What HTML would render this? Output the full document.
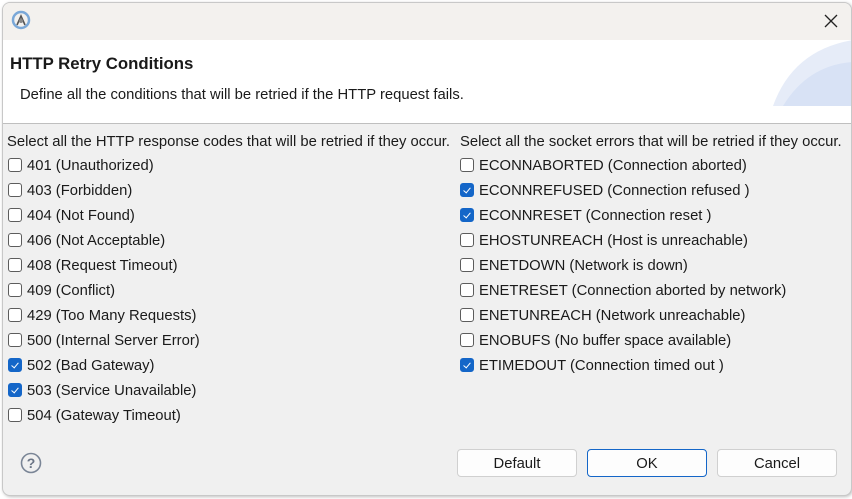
<!DOCTYPE html>
<html><head><style>
*{margin:0;padding:0;box-sizing:border-box}
body{width:852px;height:499px;background:#fff;font-family:"Liberation Sans",sans-serif;font-size:14.8px;color:#1a1a1a;position:relative;overflow:hidden}
.win{position:absolute;left:2px;top:2px;width:850px;height:494px;background:#f0f0f0;border:1px solid #c8c8c8;border-radius:8px;overflow:hidden;box-shadow:1px 1px 3px rgba(0,0,0,.25)}
.in{position:absolute;left:-3px;top:-3px;width:853px;height:497px}
.tb{position:absolute;left:0;top:0;width:100%;height:40px;background:#f3f1ee}
.hd{position:absolute;left:0;top:40px;width:100%;height:84px;background:#fff;border-bottom:1px solid #bfbfbf;overflow:hidden}
.t{position:absolute;white-space:nowrap}
.cb{position:absolute;width:14px;height:14px;border:1px solid #5c5c5c;border-radius:3px;background:#fff}
.cb.on{background:#1466c8;border-color:#1466c8}
.cb.on::after{content:"";position:absolute;left:4px;top:2px;width:3px;height:6px;border:solid #fff;border-width:0 1.3px 1.3px 0;transform:rotate(40deg)}
.btn{position:absolute;top:449px;width:120px;height:28px;background:#fdfdfd;border:1px solid #d0d0d0;border-radius:4px;text-align:center;line-height:29px}
</style></head><body>
<div class="win"><div class="in">
<div class="tb">
<svg style="position:absolute;left:11px;top:10px" width="20" height="20" viewBox="0 0 20 20"><circle cx="10" cy="10" r="8" fill="none" stroke="#7aa8d8" stroke-width="2.5"/><path d="M6 15 L10 6 L14 15" stroke="#555" stroke-width="1.6" fill="none"/><circle cx="10" cy="11" r="2" fill="#888"/></svg>
<svg style="position:absolute;left:824px;top:14px" width="14" height="14" viewBox="0 0 14 14"><path d="M1 1L13 13M13 1L1 13" stroke="#222" stroke-width="1.3"/></svg>
</div>
<div class="hd">
<svg style="position:absolute;right:0;top:0" width="80" height="66" viewBox="0 0 80 66"><path d="M0 66 Q20 10 80 0 L80 66Z" fill="#e6ecf8"/><path d="M10 66 Q35 25 80 22 L80 66Z" fill="#d8e2f5"/></svg>
<div class="t" style="left:10px;top:14px;font-weight:bold;font-size:16.8px">HTTP Retry Conditions</div>
<div class="t" style="left:20px;top:47px">Define all the conditions that will be retried if the HTTP request fails.</div>
</div>
<div class="t" style="left:7px;top:134px">Select all the HTTP response codes that will be retried if they occur.</div>
<div class="t" style="left:460px;top:134px">Select all the socket errors that will be retried if they occur.</div>

<div class="cb" style="left:8px;top:158px"></div><div class="t" style="left:27px;top:158px">401 (Unauthorized)</div>
<div class="cb" style="left:8px;top:183px"></div><div class="t" style="left:27px;top:183px">403 (Forbidden)</div>
<div class="cb" style="left:8px;top:208px"></div><div class="t" style="left:27px;top:208px">404 (Not Found)</div>
<div class="cb" style="left:8px;top:233px"></div><div class="t" style="left:27px;top:233px">406 (Not Acceptable)</div>
<div class="cb" style="left:8px;top:258px"></div><div class="t" style="left:27px;top:258px">408 (Request Timeout)</div>
<div class="cb" style="left:8px;top:283px"></div><div class="t" style="left:27px;top:283px">409 (Conflict)</div>
<div class="cb" style="left:8px;top:308px"></div><div class="t" style="left:27px;top:308px">429 (Too Many Requests)</div>
<div class="cb" style="left:8px;top:333px"></div><div class="t" style="left:27px;top:333px">500 (Internal Server Error)</div>
<div class="cb on" style="left:8px;top:358px"></div><div class="t" style="left:27px;top:358px">502 (Bad Gateway)</div>
<div class="cb on" style="left:8px;top:383px"></div><div class="t" style="left:27px;top:383px">503 (Service Unavailable)</div>
<div class="cb" style="left:8px;top:408px"></div><div class="t" style="left:27px;top:408px">504 (Gateway Timeout)</div>

<div class="cb" style="left:460px;top:158px"></div><div class="t" style="left:479px;top:158px">ECONNABORTED (Connection aborted)</div>
<div class="cb on" style="left:460px;top:183px"></div><div class="t" style="left:479px;top:183px">ECONNREFUSED (Connection refused )</div>
<div class="cb on" style="left:460px;top:208px"></div><div class="t" style="left:479px;top:208px">ECONNRESET (Connection reset )</div>
<div class="cb" style="left:460px;top:233px"></div><div class="t" style="left:479px;top:233px">EHOSTUNREACH (Host is unreachable)</div>
<div class="cb" style="left:460px;top:258px"></div><div class="t" style="left:479px;top:258px">ENETDOWN (Network is down)</div>
<div class="cb" style="left:460px;top:283px"></div><div class="t" style="left:479px;top:283px">ENETRESET (Connection aborted by network)</div>
<div class="cb" style="left:460px;top:308px"></div><div class="t" style="left:479px;top:308px">ENETUNREACH (Network unreachable)</div>
<div class="cb" style="left:460px;top:333px"></div><div class="t" style="left:479px;top:333px">ENOBUFS (No buffer space available)</div>
<div class="cb on" style="left:460px;top:358px"></div><div class="t" style="left:479px;top:358px">ETIMEDOUT (Connection timed out )</div>

<svg style="position:absolute;left:20px;top:452px" width="22" height="22" viewBox="0 0 22 22"><circle cx="11" cy="11" r="9.5" fill="none" stroke="#7a8596" stroke-width="1.6"/><text x="11" y="16" text-anchor="middle" font-family="Liberation Sans" font-weight="bold" font-size="14" fill="#6b7586">?</text></svg>

<div class="btn" style="left:457px">Default</div>
<div class="btn" style="left:587px;border-color:#1466c8">OK</div>
<div class="btn" style="left:717px">Cancel</div>
</div></div>
</body></html>
